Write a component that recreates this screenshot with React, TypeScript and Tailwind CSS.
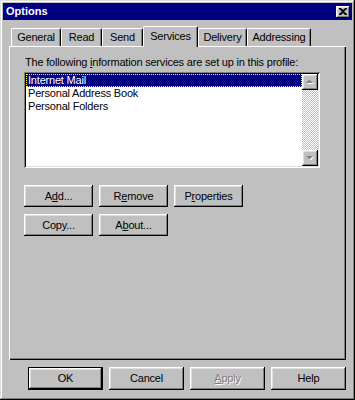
import React from "react";

const raised =
  "shadow-[inset_-1px_-1px_#000,inset_1px_1px_#fff,inset_-2px_-2px_#808080,inset_2px_2px_#dfdfdf]";

function Btn({
  children,
  w,
  className = "",
}: {
  children: React.ReactNode;
  w: string;
  className?: string;
}) {
  return (
    <div
      className={`${w} h-[22px] bg-[#c0c0c0] flex items-center justify-center ${raised} ${className}`}
    >
      {children}
    </div>
  );
}

function Arrow({ up }: { up: boolean }) {
  return (
    <svg width="16" height="16" viewBox="0 0 16 16" className="block">
      {up ? (
        <>
          <polygon points="5,10 12,10 8.5,6.5" fill="#fff" />
          <polygon points="4,9 11,9 7.5,5.5" fill="#808080" />
        </>
      ) : (
        <>
          <polygon points="5,7 12,7 8.5,10.5" fill="#fff" />
          <polygon points="4,6 11,6 7.5,9.5" fill="#808080" />
        </>
      )}
    </svg>
  );
}

function Tab({
  label,
  w,
  selected,
}: {
  label: string;
  w: string;
  selected?: boolean;
}) {
  if (selected) {
    return (
      <div
        className={`${w} h-[21px] -mb-px relative z-10 bg-[#c0c0c0] border-l border-t border-white rounded-tl-[2px] rounded-tr-[2px] border-r border-r-black shadow-[inset_-1px_0_#808080] flex items-center justify-center pb-[2px]`}
      >
        {label}
      </div>
    );
  }
  return (
    <div
      className={`${w} h-[18px] bg-[#c0c0c0] border-l border-t border-white rounded-tl-[2px] rounded-tr-[2px] border-r border-r-black shadow-[inset_-1px_0_#808080] flex items-center justify-center`}
    >
      {label}
    </div>
  );
}

export default function App() {
  return (
    <div className="w-[355px] h-[400px] bg-[#c0c0c0] p-[3px] flex flex-col shadow-[inset_-1px_-1px_#000,inset_1px_1px_#dfdfdf,inset_-2px_-2px_#808080,inset_2px_2px_#fff] font-['Liberation_Sans',Arial,sans-serif] text-[11px] leading-[13px] tracking-[-0.2px] text-black select-none">
      {/* Title bar */}
      <div className="h-[17px] bg-[#000080] flex items-center justify-between pl-[3px] pr-[2px]">
        <span className="text-white font-bold text-[11px] tracking-[0px]">Options</span>
        <div className={`w-[14px] h-[12px] bg-[#c0c0c0] flex items-center justify-center ${raised}`}>
          <svg width="8" height="7" viewBox="0 0 8 7" className="block">
            <path d="M0 0h2l2 2 2-2h2v1L5 3.5 8 6v1H6L4 5 2 7H0V6l3-2.5L0 1z" fill="#000" />
          </svg>
        </div>
      </div>

      {/* Tabs */}
      <div className="mt-[6px] ml-[8px] h-[20px] flex items-end relative z-10">
        <Tab label="General" w="w-[50px]" />
        <Tab label="Read" w="w-[41px]" />
        <Tab label="Send" w="w-[41px]" />
        <Tab label="Services" w="w-[55px]" selected />
        <Tab label="Delivery" w="w-[49px]" />
        <Tab label="Addressing" w="w-[64px]" />
      </div>

      {/* Panel */}
      <div className="ml-[6px] w-[337px] h-[314px] bg-[#c0c0c0] shadow-[inset_1px_1px_#fff,inset_-1px_-1px_#000,inset_-2px_-2px_#808080] pt-[10px] pl-[15px] flex flex-col">
        <div className="pl-px">
          The following <span className="underline underline-offset-[1px]">i</span>nformation services are set up in this profile:
        </div>
        <div className="mt-[3px] w-[296px] h-[96px] bg-white p-[2px] shadow-[inset_1px_1px_#808080,inset_-1px_-1px_#fff,inset_2px_2px_#000,inset_-2px_-2px_#dfdfdf] flex">
          <div className="flex-1 flex flex-col">
            <div className="h-[13px] bg-[#000080] text-white pl-[2px] outline-1 outline-dotted outline-[#ffff00] -outline-offset-1">
              Internet Mail
            </div>
            <div className="h-[13px] pl-[2px]">Personal Address Book</div>
            <div className="h-[13px] pl-[2px]">Personal Folders</div>
          </div>
          <div className="w-[16px] flex flex-col">
            <div className={`w-[16px] h-[16px] bg-[#c0c0c0] ${raised}`}>
              <Arrow up />
            </div>
            <div className="flex-1 bg-[image:repeating-conic-gradient(#c0c0c0_0%_25%,#ffffff_0%_50%)] bg-[length:2px_2px]" />
            <div className={`w-[16px] h-[16px] bg-[#c0c0c0] ${raised}`}>
              <Arrow up={false} />
            </div>
          </div>
        </div>

        <div className="mt-[17px] flex gap-[6px]">
          <Btn w="w-[69px]">
            <span>
              A<span className="underline underline-offset-[1px]">d</span>d...
            </span>
          </Btn>
          <Btn w="w-[69px]">
            <span>
              R<span className="underline underline-offset-[1px]">e</span>move
            </span>
          </Btn>
          <Btn w="w-[69px]">
            <span>
              P<span className="underline underline-offset-[1px]">r</span>operties
            </span>
          </Btn>
        </div>
        <div className="mt-[7px] flex gap-[6px]">
          <Btn w="w-[69px]">
            <span>
              Cop<span className="underline underline-offset-[1px]">y</span>...
            </span>
          </Btn>
          <Btn w="w-[69px]">
            <span>
              A<span className="underline underline-offset-[1px]">b</span>out...
            </span>
          </Btn>
        </div>
      </div>

      {/* Bottom buttons */}
      <div className="mt-[7px] flex justify-end gap-[6px] pr-[6px]">
        <div className="w-[75px] h-[23px] border border-black bg-[#c0c0c0] flex items-center justify-center shadow-[inset_-1px_-1px_#000,inset_1px_1px_#fff,inset_-2px_-2px_#808080,inset_2px_2px_#dfdfdf]">
          OK
        </div>
        <div className={`w-[75px] h-[23px] bg-[#c0c0c0] flex items-center justify-center ${raised}`}>
          Cancel
        </div>
        <div className={`w-[75px] h-[23px] bg-[#c0c0c0] flex items-center justify-center ${raised} text-[#808080] [text-shadow:1px_1px_0_#fff]`}>
          <span>
            <span className="underline underline-offset-[1px]">A</span>pply
          </span>
        </div>
        <div className={`w-[75px] h-[23px] bg-[#c0c0c0] flex items-center justify-center ${raised}`}>
          Help
        </div>
      </div>
    </div>
  );
}
